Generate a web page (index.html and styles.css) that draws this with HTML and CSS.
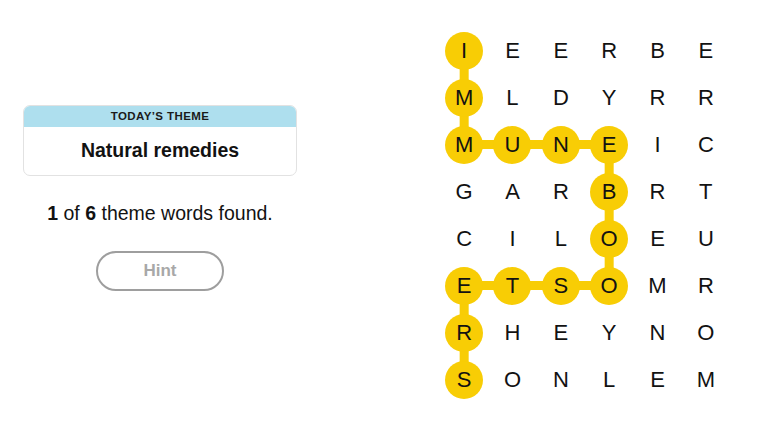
FILE: index.html
```html
<!DOCTYPE html>
<html>
<head>
<meta charset="utf-8">
<link rel="stylesheet" href="styles.css">
</head>
<body>
<div class="page">
  <section class="left">
    <div class="card">
      <div class="card-head">TODAY’S THEME</div>
      <div class="card-body">Natural remedies</div>
    </div>
    <p class="progress"><b>1</b> of <b>6</b> theme words found.</p>
    <button class="hint">Hint</button>
  </section>
  <section class="right">
    <div class="board">
      <svg class="links" viewBox="0 0 290 376" width="290" height="376">
        <polyline points="24.17,23.5 24.17,117.5 169.17,117.5 169.17,258.5 24.17,258.5 24.17,352.5" fill="none" stroke="#f8cd05" stroke-width="9" stroke-linejoin="miter"/>
      </svg>
      <div class="grid">
        <span class="cell on">I</span><span class="cell">E</span><span class="cell">E</span><span class="cell">R</span><span class="cell">B</span><span class="cell">E</span>
        <span class="cell on">M</span><span class="cell">L</span><span class="cell">D</span><span class="cell">Y</span><span class="cell">R</span><span class="cell">R</span>
        <span class="cell on">M</span><span class="cell on">U</span><span class="cell on">N</span><span class="cell on">E</span><span class="cell">I</span><span class="cell">C</span>
        <span class="cell">G</span><span class="cell">A</span><span class="cell">R</span><span class="cell on">B</span><span class="cell">R</span><span class="cell">T</span>
        <span class="cell">C</span><span class="cell">I</span><span class="cell">L</span><span class="cell on">O</span><span class="cell">E</span><span class="cell">U</span>
        <span class="cell on">E</span><span class="cell on">T</span><span class="cell on">S</span><span class="cell on">O</span><span class="cell">M</span><span class="cell">R</span>
        <span class="cell on">R</span><span class="cell">H</span><span class="cell">E</span><span class="cell">Y</span><span class="cell">N</span><span class="cell">O</span>
        <span class="cell on">S</span><span class="cell">O</span><span class="cell">N</span><span class="cell">L</span><span class="cell">E</span><span class="cell">M</span>
      </div>
    </div>
  </section>
</div>
</body>
</html>
```
FILE: styles.css
```css
* { box-sizing: border-box; }
html, body { margin: 0; padding: 0; background: #fff; }
body {
  width: 768px;
  height: 432px;
  overflow: hidden;
  font-family: "Liberation Sans", Arial, sans-serif;
  color: #121212;
}
.page {
  display: flex;
  align-items: flex-start;
}
.left {
  flex: 0 0 320px;
  width: 320px;
  padding: 105px 23px 0 23px;
  display: flex;
  flex-direction: column;
  align-items: center;
}
.card {
  width: 274px;
  border: 1px solid #e2e2e2;
  border-radius: 7px;
  overflow: hidden;
}
.card-head {
  background: #aedfee;
  height: 21px;
  line-height: 21px;
  text-align: center;
  font-size: 11.5px;
  font-weight: 700;
  letter-spacing: 0.4px;
  color: #1a1a1a;
}
.card-body {
  height: 48px;
  line-height: 47px;
  text-align: center;
  font-size: 19.5px;
  font-weight: 700;
  color: #121212;
}
.progress {
  margin: 26px 0 0 0;
  font-size: 19.5px;
  line-height: 22px;
  color: #121212;
  text-align: center;
  width: 274px;
}
.progress b { font-weight: 700; }
.hint {
  margin-top: 27px;
  width: 128px;
  height: 40px;
  border: 2px solid #9e9e9e;
  border-radius: 20px;
  background: #fff;
  color: #a8a8a8;
  font-family: "Liberation Sans", Arial, sans-serif;
  font-size: 17px;
  font-weight: 700;
  padding: 0;
}
.right {
  padding-left: 120px;
  padding-top: 27px;
}
.board {
  position: relative;
  width: 290px;
  height: 376px;
}
.links {
  position: absolute;
  left: 0;
  top: 0;
}
.grid {
  position: relative;
  z-index: 1;
  display: grid;
  grid-template-columns: repeat(6, 1fr);
  grid-template-rows: repeat(8, 47px);
  width: 290px;
  height: 376px;
}
.cell {
  position: relative;
  z-index: 0;
  display: flex;
  align-items: center;
  justify-content: center;
  font-size: 22px;
  color: #121212;
}
.cell.on::before {
  content: "";
  position: absolute;
  width: 38px;
  height: 38px;
  border-radius: 50%;
  background: #f8cd05;
  left: 50%;
  top: 50%;
  transform: translate(-50%, -50%);
  z-index: -1;
}
```
